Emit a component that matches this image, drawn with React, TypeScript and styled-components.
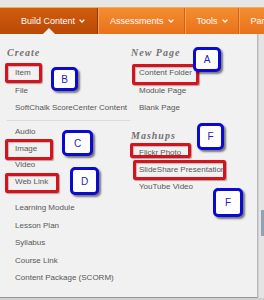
import React from 'react';
import styled, { createGlobalStyle } from 'styled-components';

const Global = createGlobalStyle`
  html, body { margin: 0; padding: 0; }
  body {
    width: 264px;
    height: 300px;
    overflow: hidden;
    background: #cfcfcf;
    font-family: "Liberation Sans", Arial, sans-serif;
  }
`;

const Shell = styled.div`
  width: 264px;
  height: 300px;
  display: flex;
  flex-direction: column;
`;

const TopStrip = styled.div`
  height: 7px;
  background: #e6e6e6;
`;

const NavBar = styled.nav`
  height: 27px;
  display: flex;
  box-sizing: border-box;
  background: linear-gradient(#f48d30, #e9711a);
  border-top: 1px solid #f7a962;
`;

const Tab = styled.div<{ $active?: boolean }>`
  display: flex;
  align-items: center;
  gap: 4px;
  padding: ${p => (p.$active ? '0 12px 0 21px' : '0 10px 0 12px')};
  color: #fff;
  font-size: 9px;
  white-space: nowrap;
  border-right: 1px solid ${p => (p.$active ? '#8f3a04' : '#d8610e')};
  box-shadow: ${p => (p.$active ? 'none' : 'inset 1px 0 0 rgba(255, 190, 130, 0.55)')};
  background: ${p => (p.$active ? 'linear-gradient(#d05c0e, #b94906)' : 'transparent')};
`;

const Chevron = () => (
  <svg width="6" height="4" viewBox="0 0 6 4">
    <polyline points="0.6,0.6 3,3 5.4,0.6" fill="none" stroke="#fff" strokeWidth="1.3" />
  </svg>
);

const Stage = styled.div`
  flex: 1;
  display: flex;
  align-items: flex-start;
`;

const Menu = styled.div`
  position: relative;
  width: 258px;
  height: 264px;
  box-sizing: border-box;
  display: flex;
  background: #f1f1f1;
  border-right: 1px solid #b9b9b9;
  border-bottom: 1px solid #979797;
`;

const Pointer = styled.div`
  position: absolute;
  top: -6px;
  left: 43px;
  width: 0;
  height: 0;
  border-left: 6px solid transparent;
  border-right: 6px solid transparent;
  border-bottom: 6px solid #f3f3f3;
`;

const Side = styled.div`
  flex: 1;
  height: 264px;
  display: flex;
  flex-direction: column;
  background: #e4e4e4;
  border-left: 1px solid #cfcfcf;
`;

const SideBar = styled.div`
  margin-top: 176px;
  height: 26px;
  margin-left: 2px;
  background: #8ea3b8;
`;

const Column = styled.div<{ $width?: number }>`
  ${p => (p.$width ? `width: ${p.$width}px;` : 'flex: 1;')}
  box-sizing: border-box;
  padding: 12px 0 0 7px;
  display: flex;
  flex-direction: column;
`;

const Heading = styled.div<{ $mt?: number; $mb?: number }>`
  margin-top: ${p => p.$mt ?? 0}px;
  margin-bottom: ${p => p.$mb ?? 4}px;
  height: 14px;
  line-height: 14px;
  font-family: "Liberation Serif", "Times New Roman", serif;
  font-style: italic;
  font-weight: bold;
  font-size: 10px;
  letter-spacing: 1px;
  color: #727272;
`;

const Group = styled.div<{ $lh: number; $mt?: number }>`
  margin-top: ${p => p.$mt ?? 0}px;
  display: flex;
  flex-direction: column;
  line-height: ${p => p.$lh}px;
`;

const Item = styled.div`
  padding-left: 8px;
  font-size: 8px;
  color: #575757;
  white-space: nowrap;
`;

const Separator = styled.div`
  margin: 3.5px -6px 0 0;
  height: 1px;
  background: #dadada;
`;

const RedBox = styled.div<{ $x: number; $y: number; $w: number; $h: number }>`
  position: absolute;
  left: ${p => p.$x}px;
  top: ${p => p.$y}px;
  width: ${p => p.$w}px;
  height: ${p => p.$h}px;
  box-sizing: border-box;
  border: 3px solid #d3141c;
  border-radius: 2px;
  box-shadow: 1px 1px 1px rgba(60, 0, 0, 0.35), inset 1px 1px 1px rgba(60, 0, 0, 0.25);
`;

const Badge = styled.div<{ $x: number; $y: number; $w: number; $h: number }>`
  position: absolute;
  left: ${p => p.$x}px;
  top: ${p => p.$y}px;
  width: ${p => p.$w}px;
  height: ${p => p.$h}px;
  box-sizing: border-box;
  display: flex;
  align-items: center;
  justify-content: center;
  background: #fff;
  border: 3.5px solid #0a0ad2;
  border-radius: 5px;
  box-shadow: 2px 2px 2px rgba(0, 0, 0, 0.5);
  font-family: "Liberation Sans", Arial, sans-serif;
  font-size: 10px;
  color: #2424b8;
`;

const redBoxes = [
  { x: 5, y: 29, w: 37, h: 20 },
  { x: 132, y: 30, w: 67, h: 21 },
  { x: 5, y: 105, w: 48, h: 21 },
  { x: 5, y: 139, w: 54, h: 20 },
  { x: 130, y: 109, w: 61, h: 15 },
  { x: 133, y: 126, w: 93, h: 20 },
];

const badges = [
  { label: 'A', x: 193, y: 13, w: 28, h: 25 },
  { label: 'B', x: 51, y: 33, w: 27, h: 24 },
  { label: 'C', x: 62, y: 96, w: 31, h: 26 },
  { label: 'D', x: 70, y: 133, w: 29, h: 28 },
  { label: 'F', x: 197, y: 89, w: 27, h: 27 },
  { label: 'F', x: 213, y: 154, w: 30, h: 29 },
];

export default function App() {
  return (
    <>
      <Global />
      <Shell>
        <TopStrip />
        <NavBar>
          <Tab $active>
            Build Content <Chevron />
          </Tab>
          <Tab>
            Assessments <Chevron />
          </Tab>
          <Tab>
            Tools <Chevron />
          </Tab>
          <Tab>Par</Tab>
        </NavBar>
        <Stage>
          <Menu>
            <Pointer />
            <Column $width={124}>
              <Heading>Create</Heading>
              <Group $lh={17.5}>
                <Item>Item</Item>
                <Item>File</Item>
                <Item>SoftChalk ScoreCenter Content</Item>
              </Group>
              <Separator />
              <Group $lh={16.67} $mt={3}>
                <Item>Audio</Item>
                <Item>Image</Item>
                <Item>Video</Item>
                <Item>Web Link</Item>
              </Group>
              <Group $lh={17.5} $mt={8.5}>
                <Item>Learning Module</Item>
                <Item>Lesson Plan</Item>
                <Item>Syllabus</Item>
                <Item>Course Link</Item>
                <Item>Content Package (SCORM)</Item>
              </Group>
            </Column>
            <Column>
              <Heading>New Page</Heading>
              <Group $lh={17.5}>
                <Item>Content Folder</Item>
                <Item>Module Page</Item>
                <Item>Blank Page</Item>
              </Group>
              <Heading $mt={12.5} $mb={0.5}>Mashups</Heading>
              <Group $lh={17}>
                <Item>Flickr Photo</Item>
                <Item>SlideShare Presentation</Item>
                <Item>YouTube Video</Item>
              </Group>
            </Column>
            {redBoxes.map((b, i) => (
              <RedBox key={i} $x={b.x} $y={b.y} $w={b.w} $h={b.h} />
            ))}
            {badges.map((b, i) => (
              <Badge key={i} $x={b.x} $y={b.y} $w={b.w} $h={b.h}>
                {b.label}
              </Badge>
            ))}
          </Menu>
          <Side>
            <SideBar />
          </Side>
        </Stage>
      </Shell>
    </>
  );
}
